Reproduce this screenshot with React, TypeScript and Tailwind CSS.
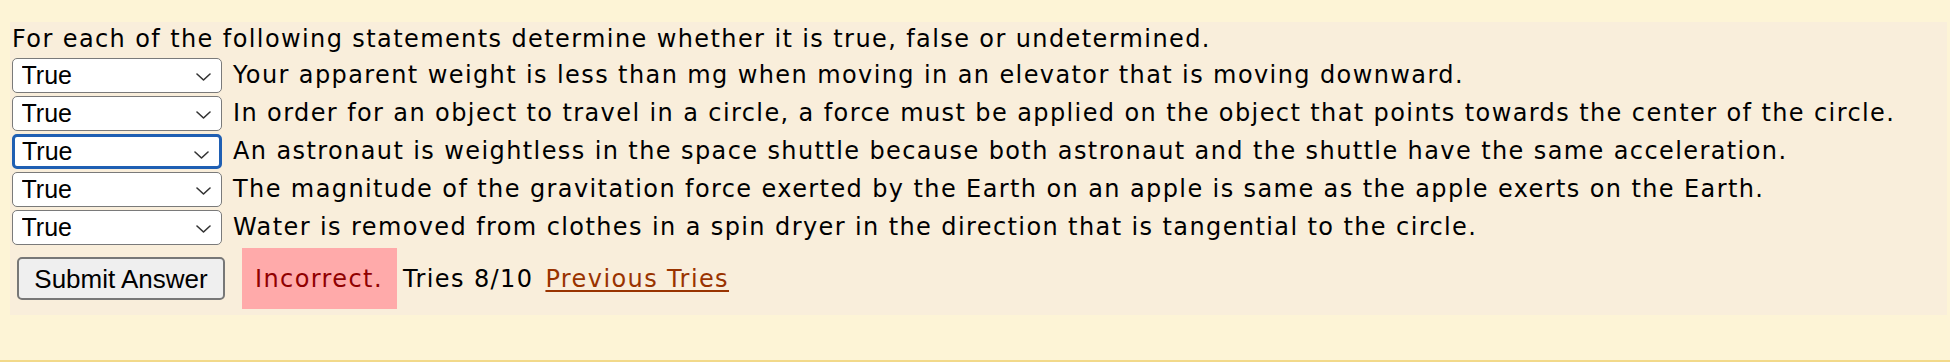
import { useState } from 'react';

const statements = [
  'Your apparent weight is less than mg when moving in an elevator that is moving downward.',
  'In order for an object to travel in a circle, a force must be applied on the object that points towards the center of the circle.',
  'An astronaut is weightless in the space shuttle because both astronaut and the shuttle have the same acceleration.',
  'The magnitude of the gravitation force exerted by the Earth on an apple is same as the apple exerts on the Earth.',
  'Water is removed from clothes in a spin dryer in the direction that is tangential to the circle.',
];

function Chevron() {
  return (
    <svg width="15" height="8" viewBox="0 0 15 8" className="pointer-events-none absolute right-[10px] top-[14px]">
      <path d="M1 1 L7.5 7 L14 1" fill="none" stroke="#333" strokeWidth="1.6" strokeLinecap="round" strokeLinejoin="round" />
    </svg>
  );
}

function Dropdown({ focused }: { focused?: boolean }) {
  const [value, setValue] = useState('True');
  return (
    <div
      className={`relative h-[35px] w-[210px] shrink-0 rounded-[5px] bg-white ${
        focused ? 'border-[3px] border-[#1f5fb3]' : 'border-[1.5px] border-[#7a7a7a]'
      }`}
    >
      <select
        value={value}
        onChange={(e) => setValue(e.target.value)}
        className={`h-full w-full appearance-none bg-transparent text-[25px] leading-none tracking-normal text-black outline-none ${
          focused ? 'pl-[7px]' : 'pl-[8.5px]'
        }`}
        style={{ fontFamily: '"Liberation Sans", Arial, sans-serif' }}
      >
        <option>True</option>
        <option>False</option>
        <option>Undetermined</option>
      </select>
      <Chevron />
    </div>
  );
}

export default function App() {
  return (
    <div className="h-[362px] w-full border-b-[2px] border-[#f2d98a] bg-[#fdf4d6] pt-[22px] pl-[10px] pr-[3px]">
      <div
        className="h-[293px] bg-[#f9eedb] pl-[2px] text-[24px] leading-[28px] tracking-[1.4px] text-black"
        style={{ fontFamily: '"DejaVu Sans", Verdana, sans-serif' }}
      >
        <div className="pt-[3px]">For each of the following statements determine whether it is true, false or undetermined.</div>
        <div className="mt-[3px] flex flex-col">
          {statements.map((s, i) => (
            <div key={i} className="flex h-[38px] items-center gap-[11px]">
              <Dropdown focused={i === 2} />
              <span className="whitespace-nowrap">{s}</span>
            </div>
          ))}
        </div>
        <div className="mt-[2px] flex items-center">
          <button
            className="ml-[5px] h-[43px] w-[208px] rounded-[5px] border-[2px] border-[#777] bg-[#efefef] text-[26px] leading-none tracking-normal text-black"
            style={{ fontFamily: '"Liberation Sans", Arial, sans-serif' }}
          >
            Submit Answer
          </button>
          <span className="ml-[17px] flex h-[61px] items-center bg-[#ffaaaa] pl-[13px] pr-[14px] text-[#900000]">Incorrect.</span>
          <span className="ml-[6px] whitespace-nowrap">Tries 8/10</span>
          <a href="#" className="ml-[12px] whitespace-nowrap text-[#993300] underline underline-offset-[3px]">
            Previous Tries
          </a>
        </div>
      </div>
    </div>
  );
}
